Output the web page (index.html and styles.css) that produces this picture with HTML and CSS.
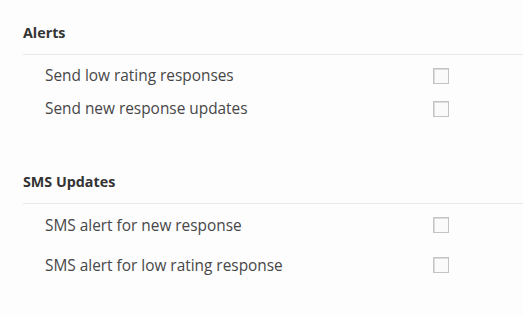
FILE: index.html
```html
<!DOCTYPE html>
<html lang="en">
<head>
    <meta charset="UTF-8">
    <title>Notification settings</title>
    <link rel="stylesheet" href="styles.css">
</head>
<body>
    <!-- Alerts -->
    <div class="section alerts">
        <h2 class="section-title">Alerts</h2>
        <ul class="option-list">
            <li class="option">
                <label for="low-rating">Send low rating responses</label>
                <input type="checkbox" id="low-rating" class="check">
            </li>
            <li class="option">
                <label for="new-response">Send new response updates</label>
                <input type="checkbox" id="new-response" class="check">
            </li>
        </ul>
    </div>

    <!-- SMS -->
    <div class="section sms">
        <h2 class="section-title">SMS Updates</h2>
        <ul class="option-list">
            <li class="option">
                <label for="sms-new">SMS alert for new response</label>
                <input type="checkbox" id="sms-new" class="check">
            </li>
            <li class="option">
                <label for="sms-low">SMS alert for low rating response</label>
                <input type="checkbox" id="sms-low" class="check">
            </li>
        </ul>
    </div>
</body>
</html>
```

FILE: styles.css
```css
/* === Base === */
body {
    margin: 0;
    padding: 23px 0 0 23px;
    background: #fdfdfe;
    color: #444;
    font-family: 'Open Sans', 'Liberation Sans', sans-serif;
    font-size: 15.4px;
}

/* === Section === */
.section-title {
    margin: 0;
    font-size: 14.3px;
    font-weight: 700;
    line-height: 20px;
    color: #333;
    padding-bottom: 11px;
    border-bottom: 1px solid #e9e9eb;
}

.sms {
    margin-top: 47px;
}

.option-list {
    list-style: none;
    margin: 0;
    padding: 4px 0 0 22px;
}

.sms .option-list {
    padding-top: 1px;
}

.option {
    display: flex;
    align-items: center;
    height: 33px;
}

.sms .option {
    height: 40px;
}

.option label {
    width: 388px;
    color: #474747;
}

/* === Checkbox === */
.check {
    appearance: none;
    margin: 0;
    width: 16px;
    height: 16px;
    box-sizing: border-box;
    border: 1px solid #c3c3c3;
    box-shadow: inset 1px 1px 0 #dcdcdc;
    background: #fafafa;
    cursor: pointer;
}
```
